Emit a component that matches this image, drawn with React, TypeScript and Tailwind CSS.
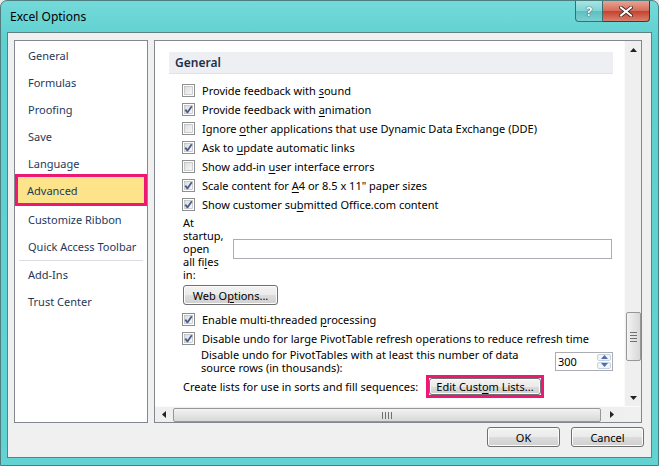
import type { ReactNode } from "react";

const NAV_TOP = ["General", "Formulas", "Proofing", "Save", "Language"];
const NAV_MID = ["Customize Ribbon", "Quick Access Toolbar"];
const NAV_BOTTOM = ["Add-Ins", "Trust Center"];

function Check({ on }: { on: boolean }) {
  return (
    <svg width="13" height="13" viewBox="0 0 13 13" className="shrink-0">
      <defs>
        <linearGradient id="cbg" x1="0" y1="0" x2="1" y2="1">
          <stop offset="0" stopColor="#dcdcdc" />
          <stop offset="1" stopColor="#f8f8f8" />
        </linearGradient>
      </defs>
      <rect x="0.5" y="0.5" width="12" height="12" fill="#fff" stroke="#8e8f8f" />
      <rect x="2.5" y="2.5" width="8" height="8" fill="url(#cbg)" stroke="#aeb0b3" strokeWidth="0.6" />
      {on ? <path d="M3.3 6.6 L5.4 9.4 L9.8 3.2" fill="none" stroke="#4a5c8c" strokeWidth="1.8" strokeLinejoin="round" /> : null}
    </svg>
  );
}

function Row({ on, children }: { on: boolean; children: ReactNode }) {
  return (
    <div className="flex h-[19px] items-center gap-[7px]">
      <Check on={on} />
      <span className="whitespace-nowrap">{children}</span>
    </div>
  );
}

function Btn({ children, className = "" }: { children: ReactNode; className?: string }) {
  return (
    <div
      className={
        "flex items-center justify-center rounded-[3px] border border-[#707070] bg-[linear-gradient(#f2f2f2,#ebebeb_50%,#dddddd_50%,#cfcfcf)] shadow-[inset_0_0_0_1px_#fcfcfc] " +
        className
      }
    >
      {children}
    </div>
  );
}

function U({ children }: { children: ReactNode }) {
  return <u className="underline-offset-[2px]">{children}</u>;
}

export default function App() {
  return (
    <div className="h-[466px] w-[659px] bg-[#e9e9e9] font-['Noto_Sans',sans-serif] text-[11px] leading-none text-black">
      <div className="flex h-full w-full flex-col overflow-hidden rounded-t-[7px] border border-[#4d7e80] bg-[linear-gradient(#74d9d9,#5fd0d0_40px,#62d2d2)]">
        {/* title bar */}
        <div className="flex h-[31px] shrink-0 items-start justify-between">
          <span className="pl-[9px] pt-[10px] text-[12px] text-black">Excel Options</span>
          <div className="mr-[8px] flex h-[21px]">
            <div className="flex w-[28px] items-center justify-center rounded-bl-[4px] border border-t-0 border-[#3e6d6f] bg-[linear-gradient(#a6e4e4,#7fd3d4_50%,#5cbfc0_50%,#7ccfd0)] text-[13px] font-bold text-white [text-shadow:0_0_1px_#2b3a3a,0_0_1px_#2b3a3a]">
              ?
            </div>
            <div className="flex w-[47px] items-center justify-center rounded-br-[4px] border border-t-0 border-l-0 border-[#6b2a20] bg-[linear-gradient(#e8a393,#d66b57_50%,#c4412c_50%,#d9806c)]">
              <svg width="14" height="11" viewBox="0 0 14 11">
                <path d="M2 1.5 L12 9.5 M12 1.5 L2 9.5" stroke="#3a2420" strokeWidth="3.6" strokeLinecap="square" />
                <path d="M2 1.5 L12 9.5 M12 1.5 L2 9.5" stroke="#ffffff" strokeWidth="2" strokeLinecap="square" />
              </svg>
            </div>
          </div>
        </div>

        {/* client area */}
        <div className="mx-[6px] flex h-[426px] flex-col border border-[#5f8082] bg-[#f0f0f0] px-[6px] pt-[7px]">
          <div className="flex h-[383px] gap-[6px]">
            {/* left nav */}
            <div className="flex w-[134px] flex-col border border-[#828790] bg-white pt-[1px] text-[#1e395b]">
              {NAV_TOP.map((n) => (
                <div key={n} className="flex h-[27px] items-center pl-[13px]">
                  {n}
                </div>
              ))}
              <div className="-mt-[3px] flex h-[32px] items-center border-[3px] border-[#ec1874] bg-[#fde38a] pl-[9px]">
                Advanced
              </div>
              {NAV_MID.map((n) => (
                <div key={n} className="flex h-[27px] items-center pl-[13px]">
                  {n}
                </div>
              ))}
              <div className="mx-[4px] h-px bg-[#dadde3]" />
              {NAV_BOTTOM.map((n) => (
                <div key={n} className="flex h-[27px] items-center pl-[13px]">
                  {n}
                </div>
              ))}
            </div>

            {/* right panel */}
            <div className="flex w-[488px] flex-col border border-[#828790] bg-white">
              <div className="flex h-[365px]">
                <div className="flex-1 overflow-hidden">
                  <div className="ml-[14px] mr-[11px] mt-[11px] flex h-[22px] items-center border-b border-[#e2e3ea] bg-[#eeeff3] pl-[6px] text-[12px] font-semibold text-[#1f2f4a]">
                    General
                  </div>
                  <div className="mt-[7px] pl-[27px]">
                    <Row on={false}>
                      Provide feedback with <U>s</U>ound
                    </Row>
                    <Row on>
                      Provide feedback with <U>a</U>nimation
                    </Row>
                    <Row on={false}>
                      Ignore <U>o</U>ther applications that use Dynamic Data Exchange (DDE)
                    </Row>
                    <Row on>
                      Ask to <U>u</U>pdate automatic links
                    </Row>
                    <Row on={false}>
                      Show add-in <U>u</U>ser interface errors
                    </Row>
                    <Row on>
                      Scale content for <U>A</U>4 or 8.5 x 11" paper sizes
                    </Row>
                    <Row on>
                      Show customer su<U>b</U>mitted Office.com content
                    </Row>
                  </div>
                  <div className="mt-[2px] flex items-center pl-[28px]">
                    <div className="w-[50px] leading-[13px]">
                      At
                      <br />
                      startup,
                      <br />
                      open
                      <br />
                      all fi<U>l</U>es
                      <br />
                      in:
                    </div>
                    <div className="h-[20px] w-[379px] border border-[#abadb3] bg-white" />
                  </div>
                  <div className="mt-[4px] pl-[28px]">
                    <Btn className="h-[20px] w-[95px]">
                      Web O<U>p</U>tions...
                    </Btn>
                  </div>
                  <div className="mt-[5px] pl-[27px]">
                    <Row on>
                      Enable multi-threaded <U>p</U>rocessing
                    </Row>
                    <Row on>Disable undo for large PivotTable refresh operations to reduce refresh time</Row>
                  </div>
                  <div className="flex items-center pl-[46px]">
                    <div className="w-[354px] leading-[13px]">
                      Disable undo for PivotTables with at least this number of data
                      <br />
                      source rows (in thousands):
                    </div>
                    <div className="flex h-[19px] w-[58px] items-center border border-[#abadb3] bg-white pl-[2px]">
                      <span className="flex-1">300</span>
                      <div className="mr-[1px] flex h-[15px] w-[14px] flex-col gap-px">
                        <div className="flex flex-1 items-center justify-center rounded-[2px] border border-[#c4d2e2] bg-[#f1f5fa]">
                          <svg width="7" height="4" viewBox="0 0 7 4">
                            <path d="M0 4 L3.5 0 L7 4 Z" fill="#4f6fa8" />
                          </svg>
                        </div>
                        <div className="flex flex-1 items-center justify-center rounded-[2px] border border-[#c4d2e2] bg-[#f1f5fa]">
                          <svg width="7" height="4" viewBox="0 0 7 4">
                            <path d="M0 0 L3.5 4 L7 0 Z" fill="#4f6fa8" />
                          </svg>
                        </div>
                      </div>
                    </div>
                  </div>
                  <div className="mt-[1px] flex items-center pl-[28px]">
                    <span className="w-[243px] whitespace-nowrap">Create lists for use in sorts and fill sequences:</span>
                    <div className="border-[3px] border-[#ec1874]">
                      <Btn className="h-[17px] w-[112px]">
                        Edit Cust<U>o</U>m Lists...
                      </Btn>
                    </div>
                  </div>
                </div>

                {/* vertical scrollbar */}
                <div className="flex w-[17px] flex-col border-l border-[#fafafa] bg-[#efefef]">
                  <div className="flex h-[17px] items-center justify-center">
                    <svg width="7" height="4" viewBox="0 0 7 4">
                      <path d="M0 4 L3.5 0 L7 4 Z" fill="#222" />
                    </svg>
                  </div>
                  <div className="flex-1">
                    <div className="ml-px mt-[254px] flex h-[49px] w-[15px] items-center justify-center rounded-[2px] border border-[#979797] bg-[linear-gradient(90deg,#f3f3f3,#e4e4e4_55%,#d8d8d8)]">
                      <div className="flex w-[7px] flex-col gap-[2px]">
                        <div className="h-px bg-[#6f6f6f]" />
                        <div className="h-px bg-[#6f6f6f]" />
                        <div className="h-px bg-[#6f6f6f]" />
                        <div className="h-px bg-[#6f6f6f]" />
                      </div>
                    </div>
                  </div>
                  <div className="flex h-[17px] items-center justify-center">
                    <svg width="7" height="4" viewBox="0 0 7 4">
                      <path d="M0 0 L3.5 4 L7 0 Z" fill="#222" />
                    </svg>
                  </div>
                </div>
              </div>

              {/* horizontal scrollbar */}
              <div className="flex h-[16px] border-t border-[#fafafa] bg-[#efefef]">
                <div className="flex w-[18px] items-center justify-center">
                  <svg width="4" height="7" viewBox="0 0 4 7">
                    <path d="M4 0 L0 3.5 L4 7 Z" fill="#222" />
                  </svg>
                </div>
                <div className="mt-px flex h-[14px] w-[428px] items-center justify-center rounded-[2px] border border-[#979797] bg-[linear-gradient(#f3f3f3,#e4e4e4_55%,#d8d8d8)]">
                  <div className="flex h-[7px] gap-[2px]">
                    <div className="w-px bg-[#6f6f6f]" />
                    <div className="w-px bg-[#6f6f6f]" />
                    <div className="w-px bg-[#6f6f6f]" />
                    <div className="w-px bg-[#6f6f6f]" />
                  </div>
                </div>
                <div className="flex w-[22px] items-center justify-center">
                  <svg width="4" height="7" viewBox="0 0 4 7">
                    <path d="M0 0 L4 3.5 L0 7 Z" fill="#222" />
                  </svg>
                </div>
                <div className="w-[17px] bg-[#f0f0f0]" />
              </div>
            </div>
          </div>

          {/* dialog buttons */}
          <div className="mt-[4px] flex justify-end gap-[11px] pr-px">
            <Btn className="h-[20px] w-[73px] border-[#3c7fb1] shadow-[inset_0_0_0_1px_#9fd5f6]">OK</Btn>
            <Btn className="h-[20px] w-[73px]">Cancel</Btn>
          </div>
        </div>
      </div>
    </div>
  );
}
